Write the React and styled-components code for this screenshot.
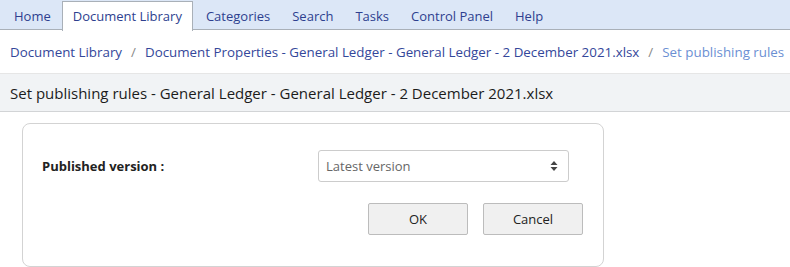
import React from 'react'
import styled, { createGlobalStyle } from 'styled-components'

const Global = createGlobalStyle`
body {
  margin: 0;
  background: #fff;
  font-family: "Open Sans", "Noto Sans", sans-serif;
  font-size: 13px;
}
`

const Page = styled.div`
width: 790px;
height: 267px;
overflow: hidden;
`

const TabBar = styled.ul`
display: flex;
margin: 0;
padding: 1px 0 0 3px;
height: 30px;
box-sizing: border-box;
list-style: none;
background: #dce7f7;
border-bottom: 1px solid #a9b0b8;
`

const Tab = styled.li`
padding: 0 10px;
margin-right: ${p => (p.$active ? '2px' : '0')};
height: ${p => (p.$active ? '30px' : '28px')};
line-height: 28px;
color: #2e3f8f;
background: ${p => (p.$active ? '#fff' : 'transparent')};
border: 1px solid ${p => (p.$active ? '#a9b0b8' : 'transparent')};
border-bottom: none;
box-sizing: border-box;
white-space: nowrap;
`

const Crumbs = styled.div`
display: flex;
align-items: center;
height: 43px;
padding-left: 10px;
color: #34479a;
font-size: 13.35px;
white-space: nowrap;
`

const Sep = styled.span`
color: #888;
margin: 0 9px;
`

const Current = styled.span`
color: #6b8fd3;
`

const TitleBar = styled.div`
height: 37px;
display: flex;
align-items: center;
padding-left: 10px;
background: #f1f3f5;
border-top: 1px solid #e6e6e6;
border-bottom: 1px solid #d2d4d6;
color: #1c1c1c;
font-size: 15px;
white-space: nowrap;
`

const Content = styled.div`
padding: 11px 0 0 22px;
`

const Card = styled.div`
width: 582px;
height: 144px;
box-sizing: border-box;
border: 1px solid #d3d3d3;
border-radius: 8px;
padding: 26px 20px 0 19px;
`

const FormRow = styled.div`
display: grid;
grid-template-columns: 276px 251px;
align-items: center;
`

const Label = styled.label`
font-weight: 700;
color: #222;
`

const Select = styled.div`
height: 32px;
box-sizing: border-box;
border: 1px solid #cccccc;
border-radius: 3px;
display: flex;
align-items: center;
justify-content: space-between;
padding: 0 10px 0 7px;
color: #666;
`

const Buttons = styled.div`
display: flex;
justify-content: flex-end;
gap: 15px;
margin-top: 21px;
`

const Button = styled.button`
width: 100px;
height: 32px;
background: #f0f0f0;
border: 1px solid #bcbcbc;
border-radius: 2px;
font-family: inherit;
font-size: 13px;
color: #222;
`

const Arrows = () => (
  <svg width="8" height="12" viewBox="0 0 8 12">
    <path d="M4 1 L7.5 5 H0.5 Z" fill="#444" />
    <path d="M4 11 L7.5 7 H0.5 Z" fill="#444" />
  </svg>
)

const tabs = ['Home', 'Document Library', 'Categories', 'Search', 'Tasks', 'Control Panel', 'Help']

export default function App() {
  return (
    <Page>
      <Global />
      <TabBar>
        {tabs.map(t => (
          <Tab key={t} $active={t === 'Document Library'}>{t}</Tab>
        ))}
      </TabBar>
      <Crumbs>
        <span>Document Library</span>
        <Sep>/</Sep>
        <span>Document Properties - General Ledger - General Ledger - 2 December 2021.xlsx</span>
        <Sep>/</Sep>
        <Current>Set publishing rules</Current>
      </Crumbs>
      <TitleBar>Set publishing rules - General Ledger - General Ledger - 2 December 2021.xlsx</TitleBar>
      <Content>
        <Card>
          <FormRow>
            <Label>Published version :</Label>
            <Select>
              <span>Latest version</span>
              <Arrows />
            </Select>
          </FormRow>
          <Buttons>
            <Button>OK</Button>
            <Button>Cancel</Button>
          </Buttons>
        </Card>
      </Content>
    </Page>
  )
}
